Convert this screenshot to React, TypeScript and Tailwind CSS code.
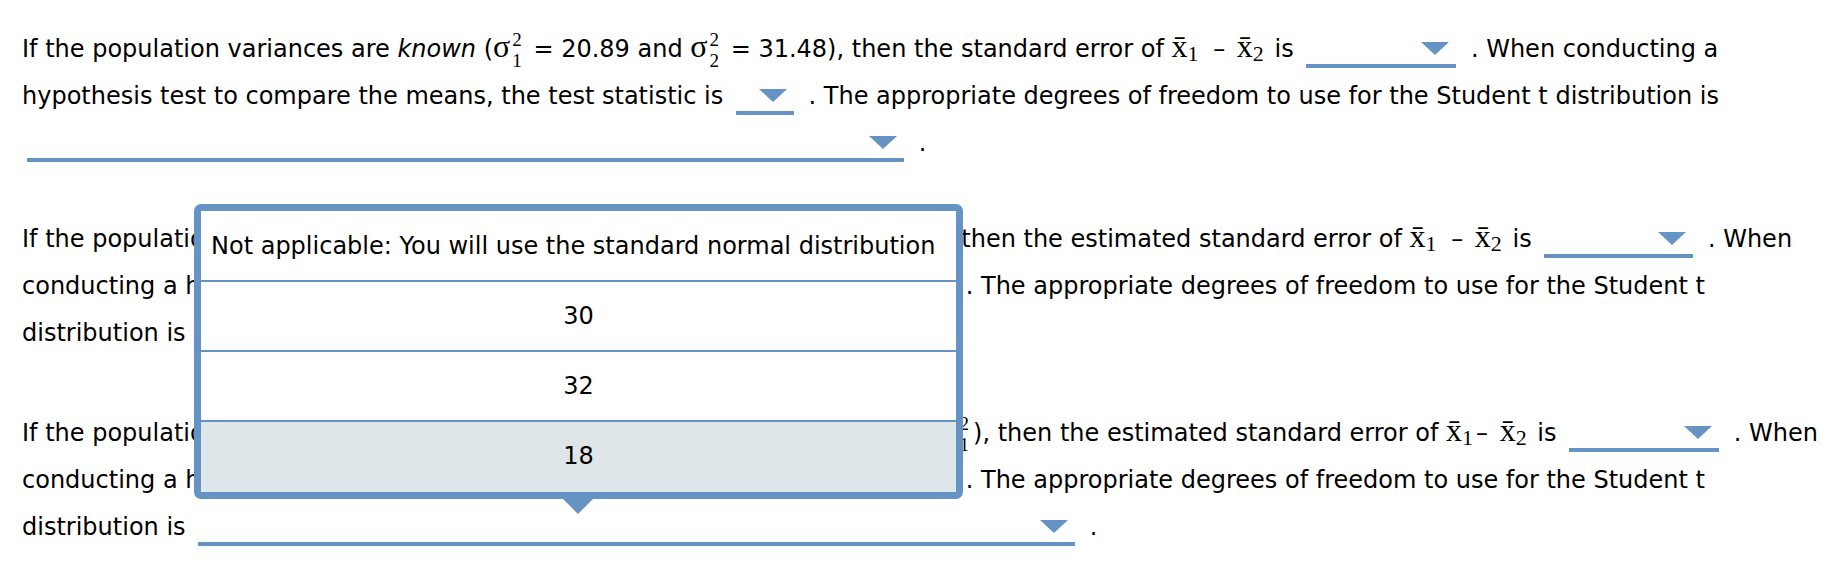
const blue = "border-[#6593c4]";

function Arrow() {
  return (
    <svg className="absolute right-[7px] top-0" width="28" height="13" viewBox="0 0 28 13">
      <polygon points="0,0 28,0 14,13" fill="#6593c4" />
    </svg>
  );
}

function Dd({ w }: { w: string }) {
  return (
    <span className={`relative inline-block h-[26px] border-b-4 ${blue} align-[-11px] ml-[5px] mr-[7px] ${w}`}>
      <Arrow />
    </span>
  );
}

function Xbar({ n }: { n: string }) {
  return (
    <span className="pr-[3px] font-['Liberation_Serif',serif] text-[32px]">
      x̄<span className="relative top-[4px] text-[22px]">{n}</span>
    </span>
  );
}

function Minus({ tight }: { tight?: boolean }) {
  return <span className={tight ? "mr-[4px]" : "mx-[4px]"}>–</span>;
}

function Sig({ a, b }: { a: string; b: string }) {
  return (
    <span className="font-['Liberation_Serif',serif] text-[32px]">
      σ
      <span className="ml-[2px] mr-[4px] inline-flex flex-col align-[11px] text-[19px] leading-[21px]">
        <span>{a}</span>
        <span>{b}</span>
      </span>
    </span>
  );
}

export default function App() {
  return (
    <div className="relative h-[586px] w-full overflow-hidden bg-white pl-[22px] pr-[14px] font-['DejaVu_Sans',sans-serif] text-[24px] leading-[47px] text-black">
      <p className="pt-[23px]">
        If the population variances are <i>known</i> (<Sig a="2" b="1" /> = 20.89 and <Sig a="2" b="2" /> = 31.48), then the
        standard error of <Xbar n="1" /> <Minus /> <Xbar n="2" /> is <Dd w="w-[150px]" /> . When conducting a hypothesis test to
        compare the means, the test statistic is <Dd w="w-[58px]" /> . The appropriate degrees of freedom to use for the Student t
        distribution is <Dd w="w-[877px]" /> .
      </p>

      <p className="mt-[46px]">
        If the population variances are <i>unknown</i> and assumed to be equal (<Sig a="2" b="1" /> = <Sig a="2" b="2" />), then the
        estimated standard error of <Xbar n="1" /> <Minus /> <Xbar n="2" /> is <Dd w="w-[149px]" /> . When conducting a hypothesis
        test to compare the means, the test statistic is <Dd w="w-[52px]" /> . The appropriate degrees of freedom to use for the
        Student t distribution is <Dd w="w-[150px]" /> .
      </p>

      <p className="mt-[50px]">
        If the population variances are <i>unknown</i> and assumed to be unequal (<Sig a="2" b="2" />{" "}
        <span className="mx-[3px]">≠</span> <Sig a="2" b="1" />), then the estimated standard error of <Xbar n="1" />
        <Minus tight /> <Xbar n="2" /> is <Dd w="w-[150px]" /> . When conducting a hypothesis test to compare the means, the test
        statistic is <Dd w="w-[52px]" /> . The appropriate degrees of freedom to use for the Student t distribution is{" "}
        <Dd w="w-[877px]" /> .
      </p>

      <div className="absolute left-[194px] top-[204px] w-[769px] leading-normal">
        <div className={`overflow-hidden rounded-[7px] border-[7px] ${blue} bg-white`}>
          <div className="flex h-[69px] items-center whitespace-nowrap pl-[10px]">
            Not applicable: You will use the standard normal distribution
          </div>
          <div className={`flex h-[70px] items-center justify-center border-t-2 ${blue}`}>30</div>
          <div className={`flex h-[70px] items-center justify-center border-t-2 ${blue}`}>32</div>
          <div className={`flex h-[72px] items-center justify-center border-t-2 ${blue} bg-[#dfe6e9] pb-[2px]`}>18</div>
        </div>
        <svg className="absolute left-[369px] top-full" width="30" height="15" viewBox="0 0 30 15">
          <polygon points="0,0 30,0 15,15" fill="#6593c4" />
        </svg>
      </div>
    </div>
  );
}
